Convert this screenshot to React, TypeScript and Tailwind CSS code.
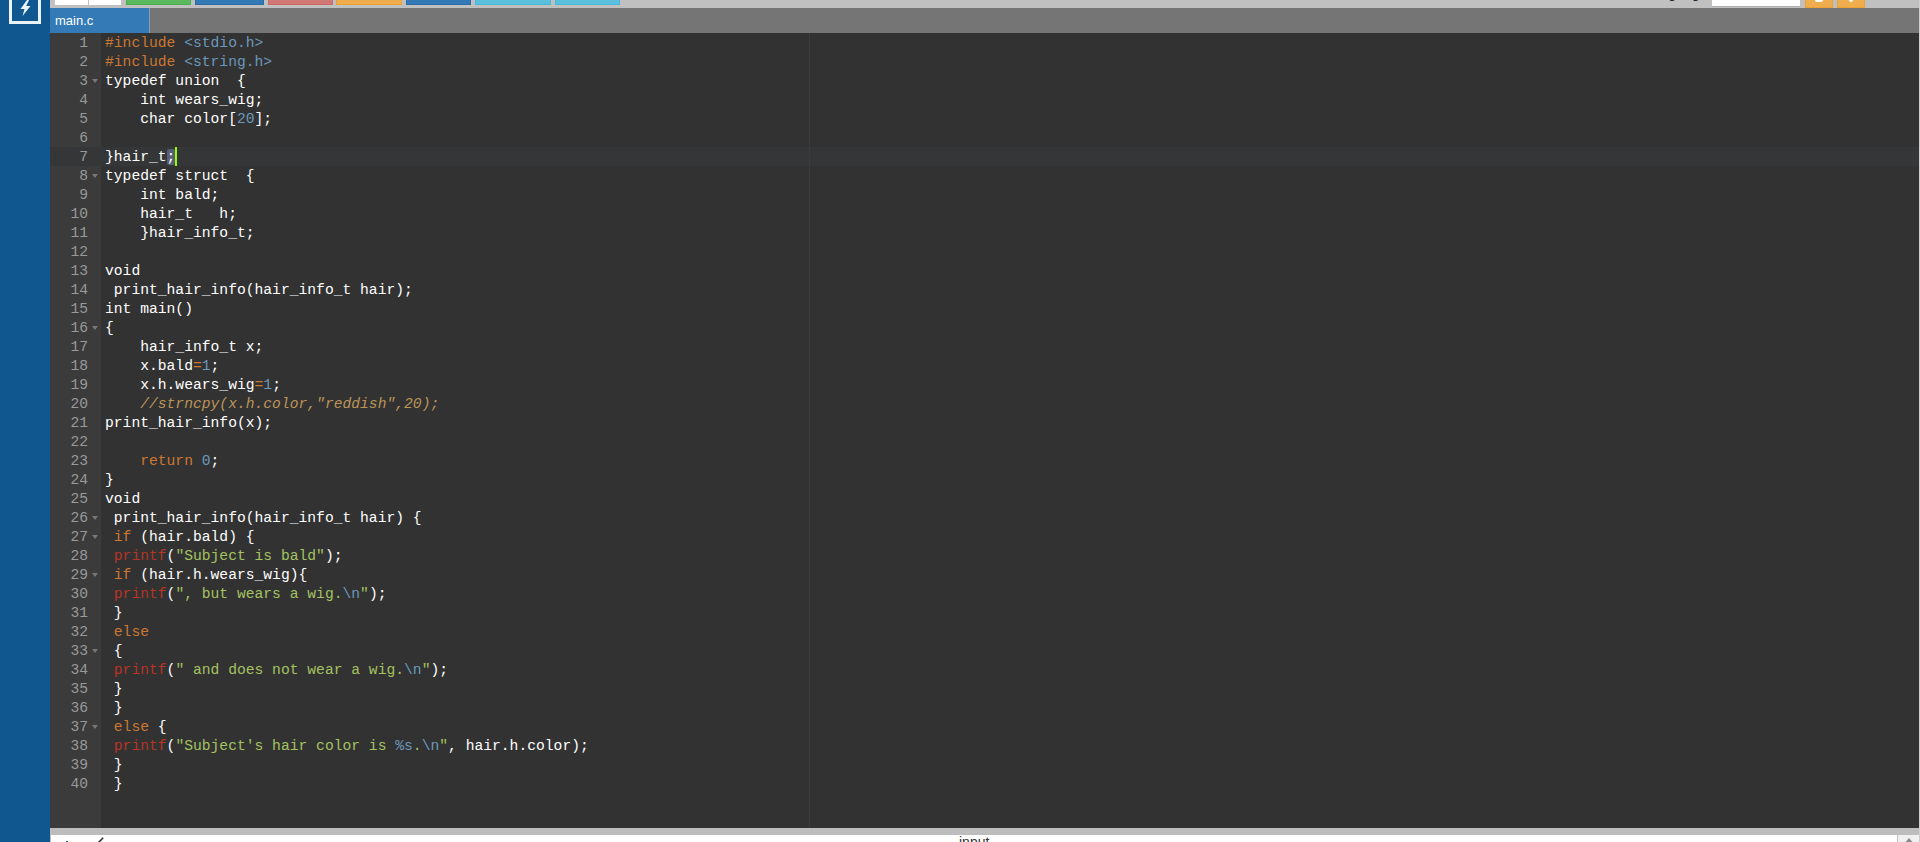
import type { ReactNode } from "react";

const FOLDS = [3, 8, 16, 26, 27, 29, 33, 37];

const kw = "text-[#cc7833]";
const num = "text-[#6c99bb]";
const str = "text-[#a5c261]";
const fn = "text-[#b83426]";
const cm = "text-[#bc9458] italic";

// [text, colour] pieces per line, plain strings stay white
type Piece = string | [string, string];

const CODE: Piece[][] = [
  [["#include", kw], " ", ["<stdio.h>", num]],
  [["#include", kw], " ", ["<string.h>", num]],
  ["typedef union  {"],
  ["    int wears_wig;"],
  ["    char color[", ["20", num], "];"],
  [],
  [],
  ["typedef struct  {"],
  ["    int bald;"],
  ["    hair_t   h;"],
  ["    }hair_info_t;"],
  [],
  ["void"],
  [" print_hair_info(hair_info_t hair);"],
  ["int main()"],
  ["{"],
  ["    hair_info_t x;"],
  ["    x.bald", ["=", kw], ["1", num], ";"],
  ["    x.h.wears_wig", ["=", kw], ["1", num], ";"],
  [["    //strncpy(x.h.color,\"reddish\",20);", cm]],
  ["print_hair_info(x);"],
  [],
  ["    ", ["return", kw], " ", ["0", num], ";"],
  ["}"],
  ["void"],
  [" print_hair_info(hair_info_t hair) {"],
  [" ", ["if", kw], " (hair.bald) {"],
  [" ", ["printf", fn], "(", ["\"Subject is bald\"", str], ");"],
  [" ", ["if", kw], " (hair.h.wears_wig){"],
  [" ", ["printf", fn], "(", ["\", but wears a wig.", str], ["\\n", num], ["\"", str], ");"],
  [" }"],
  [" ", ["else", kw]],
  [" {"],
  [" ", ["printf", fn], "(", ["\" and does not wear a wig.", str], ["\\n", num], ["\"", str], ");"],
  [" }"],
  [" }"],
  [" ", ["else", kw], " {"],
  [" ", ["printf", fn], "(", ["\"Subject's hair color is ", str], ["%s", num], [".", str], ["\\n", num], ["\"", str], ", hair.h.color);"],
  [" }"],
  [" }"],
];

function GutterCell({ n, active }: { n?: number; active?: boolean }) {
  return (
    <div className={`flex w-[51px] shrink-0 items-center ${active ? "bg-[#353637]" : "bg-[#3b3b3b]"}`}>
      <span className="w-[38px] pt-[2px] text-right text-[#999999]">{n}</span>
      {n && FOLDS.includes(n) && (
        <span className="ml-[4px] h-0 w-0 border-x-[3px] border-t-[4px] border-x-transparent border-t-[#777777]" />
      )}
    </div>
  );
}

function Line({ n, children, active }: { n: number; children: ReactNode; active?: boolean }) {
  return (
    <div className={`flex h-[19px] shrink-0 ${active ? "bg-[#353637]" : ""}`}>
      <GutterCell n={n} active={active} />
      <div className="whitespace-pre pl-[4px] pt-px text-white">{children}</div>
    </div>
  );
}

export default function App() {
  return (
    <div className="flex h-screen overflow-hidden bg-white font-['Liberation_Sans',Arial,sans-serif]">
      {/* side rail */}
      <div className="flex w-[50px] shrink-0 flex-col items-center bg-[#10568f]">
        <div className="-mt-2 flex h-8 w-8 items-center justify-center border-[3px] border-[#eaf3fa]">
          <svg viewBox="0 0 11 16" className="h-4 w-[11px]" fill="#eaf3fa">
            <path d="M7 0 L0.5 9 H4.5 L2.5 16 L10.5 6 H6.2 L9 0 Z" />
          </svg>
        </div>
      </div>

      <div className="flex min-w-0 flex-1 flex-col border-r border-[#cfcfcf]">
        {/* toolbar, only its lower edge is in view */}
        <div className="flex h-2 shrink-0 items-end overflow-hidden bg-[#c0c0c0] pl-[5px]">
          <div className="mb-[3px] h-5 w-[33px] bg-white" />
          <div className="mb-[3px] ml-px h-5 w-[32px] bg-white" />
          <div className="mb-[3px] ml-[5px] h-5 w-[65px] border border-[#4cae4c] bg-[#5cb85c]" />
          <div className="mb-[3px] ml-[4px] h-5 w-[69px] border border-[#2e6da4] bg-[#337ab7]" />
          <div className="mb-[3px] ml-[4px] h-5 w-[65px] border border-[#d43f3a] bg-[#d9534f] opacity-65" />
          <div className="mb-[3px] ml-[3px] h-5 w-[66px] border border-[#eea236] bg-[#f0ad4e]" />
          <div className="mb-[3px] ml-[4px] h-5 w-[65px] border border-[#2e6da4] bg-[#337ab7]" />
          <div className="mb-[3px] ml-[4px] h-5 w-[76px] border border-[#46b8da] bg-[#5bc0de]" />
          <div className="mb-[3px] ml-[4px] h-5 w-[65px] border border-[#46b8da] bg-[#5bc0de]" />
          <span className="mb-[8px] ml-[1025px] text-sm leading-[14px] text-[#222222]">Language</span>
          <div className="mb-px ml-[5px] h-5 w-[88px] border-b border-[#b0b0b0] bg-white" />
          <div className="ml-[5px] flex h-5 w-[28px] items-end justify-center border border-[#eea236] bg-[#f0ad4e] pb-[5px]">
            <span className="h-[2px] w-[8px] rounded-b-full bg-white" />
          </div>
          <div className="ml-[4px] flex h-5 w-[28px] items-end justify-center border border-[#eea236] bg-[#f0ad4e] pb-[5px]">
            <span className="h-[2px] w-[4px] rounded-b-full bg-white" />
          </div>
        </div>

        {/* file tabs */}
        <div className="flex h-[25px] shrink-0 bg-[#757575]">
          <div className="flex w-[100px] items-center border-r border-[#8a9bad] bg-[#337ab7] pl-[5px] text-[13px] text-white">
            main.c
          </div>
        </div>

        {/* code editor */}
        <div className="relative flex min-h-0 flex-1 flex-col bg-[#323232] font-['Liberation_Mono',monospace] text-[14.66px] leading-[19px]">
          <div className="absolute inset-y-0 left-[759px] w-px bg-[#3b3b3b]" />
          {CODE.map((pieces, i) => {
            const n = i + 1;
            if (n === 7) {
              return (
                <Line key={n} n={n} active>
                  {"}hair_t"}
                  <span className="rounded-[2px] bg-[#565f77]">;</span>
                  <span className="-mt-px inline-block h-[19px] w-[2px] bg-[#91ff00] align-top" />
                </Line>
              );
            }
            return (
              <Line key={n} n={n}>
                {pieces.map((p, j) =>
                  typeof p === "string" ? p : <span key={j} className={p[1]}>{p[0]}</span>
                )}
              </Line>
            );
          })}
          <div className="relative flex flex-1">
            <GutterCell />
          </div>
        </div>

        {/* splitter */}
        <div className="h-[7px] shrink-0 bg-[#bdbdbd]" />

        {/* stdin panel, cut off by the window */}
        <div className="flex h-[7px] shrink-0 overflow-hidden border-l border-[#bdbdbd] bg-white">
          <span className="ml-[15px] mt-[6px] h-px w-[2px] bg-[#33506e]" />
          <svg viewBox="0 0 7 7" className="ml-[29px] mt-[2px] h-[7px] w-[7px]" fill="none" stroke="#333333" strokeWidth="1.6">
            <path d="M0.8 6.2 L6.2 0.8" />
          </svg>
          <span className="ml-[855px] text-sm leading-[14px] text-[#333333]">input</span>
          <div className="ml-auto flex w-[22px] justify-center border-l border-[#b8c2cf] bg-[#f0f0f0] pt-[3px]">
            <span className="h-0 w-0 border-x-[6px] border-b-[7px] border-x-transparent border-b-[#8a8a8a]" />
          </div>
        </div>
      </div>
    </div>
  );
}
